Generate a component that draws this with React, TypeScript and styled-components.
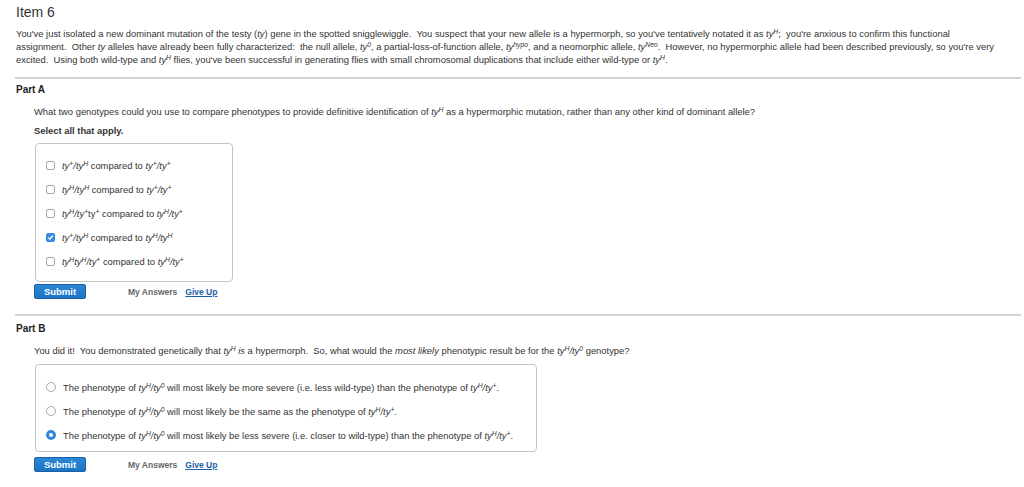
import React from "react";
import { styled, createGlobalStyle } from "styled-components";

const GlobalStyle = createGlobalStyle`
  html, body {
    margin: 0;
    padding: 0;
    background: #fff;
    font-family: "Liberation Sans", Arial, sans-serif;
    color: #333;
  }
`;

const Page = styled.div`
  padding: 3px 3px 0 15px;
  font-size: 9.4px;
`;

const Title = styled.div`
  font-size: 14px;
  line-height: 18px;
  padding-left: 1px;
  color: #333;
`;

const Intro = styled.p`
  margin: 6px 0 0 1px;
  line-height: 13px;
  white-space: nowrap;
`;

const Gene = styled.i`
  font-style: italic;
`;

const Sup = styled.sup`
  font-size: 6.8px;
  line-height: 0;
  vertical-align: 3.5px;
`;

const Divider = styled.div<{ $gap?: number }>`
  margin-top: ${(p) => p.$gap ?? 11}px;
  border-top: 2px solid #d3d3d3;
`;

const PartTitle = styled.div<{ $top?: number }>`
  margin-top: ${(p) => p.$top ?? 4}px;
  padding-left: 1px;
  font-size: 10px;
  font-weight: bold;
  line-height: 14px;
  color: #222;
`;

const PartBody = styled.div`
  padding-left: 19px;
`;

const Question = styled.p<{ $top?: number }>`
  margin: ${(p) => p.$top ?? 8}px 0 0;
  line-height: 13px;
`;

const Instruction = styled.p`
  margin: 6px 0 0;
  line-height: 13px;
  font-weight: bold;
`;

const ChoiceBox = styled.div<{ $width: number; $pad: string; $top?: number }>`
  box-sizing: border-box;
  width: ${(p) => p.$width}px;
  margin: ${(p) => p.$top ?? 6}px 0 0 1px;
  padding: ${(p) => p.$pad};
  border: 1px solid #c4c4c4;
  border-radius: 4px;
  background: #fff;
`;

const ChoiceRow = styled.div`
  display: flex;
  align-items: center;
  height: 24px;
  padding-left: 10px;
`;

const CheckBox = styled.span<{ $checked: boolean }>`
  box-sizing: border-box;
  width: 9px;
  height: 9px;
  border-radius: 2px;
  display: flex;
  align-items: center;
  justify-content: center;
  border: 1px solid ${(p) => (p.$checked ? "#2f86de" : "#a8a8a8")};
  background: ${(p) => (p.$checked ? "#3d8fe3" : "#fff")};
`;

const Radio = styled.span<{ $selected: boolean }>`
  box-sizing: border-box;
  width: 10px;
  height: 10px;
  border-radius: 50%;
  border: ${(p) => (p.$selected ? "3px solid #2f86de" : "1px solid #a8a8a8")};
  background: #fff;
`;

const ChoiceText = styled.span`
  margin-left: 7px;
  line-height: 13px;
  color: #333;
`;

const ActionRow = styled.div<{ $top?: number }>`
  display: flex;
  align-items: center;
  margin-top: ${(p) => p.$top ?? 2}px;
`;

const SubmitButton = styled.button`
  box-sizing: border-box;
  width: 52px;
  height: 15px;
  padding: 0;
  border: 1px solid #1a5fa5;
  border-radius: 2px;
  background: linear-gradient(#2a88d6, #1c74c4);
  color: #fff;
  font-family: "Liberation Sans", Arial, sans-serif;
  font-size: 9.5px;
  font-weight: bold;
  line-height: 13px;
  cursor: pointer;
`;

const MyAnswers = styled.span`
  margin-left: 42px;
  font-size: 8.5px;
  font-weight: bold;
  color: #666;
`;

const GiveUp = styled.a`
  margin-left: 8px;
  font-size: 8.5px;
  font-weight: bold;
  color: #1c5ea8;
  text-decoration: underline;
  cursor: pointer;
`;

const Ty = ({ sup }: { sup: string }) => (
  <Gene>
    ty<Sup>{sup}</Sup>
  </Gene>
);

const Pair = ({ a, b }: { a: string; b: string }) => (
  <Gene>
    ty<Sup>{a}</Sup>/ty<Sup>{b}</Sup>
  </Gene>
);

const checkOptions: { content: React.ReactNode; checked?: boolean }[] = [
  {
    content: (
      <>
        <Pair a="+" b="H" /> compared to <Pair a="+" b="+" />
      </>
    ),
  },
  {
    content: (
      <>
        <Pair a="H" b="H" /> compared to <Pair a="+" b="+" />
      </>
    ),
  },
  {
    content: (
      <>
        <Pair a="H" b="+" />ty<Sup>+</Sup> compared to <Pair a="H" b="+" />
      </>
    ),
  },
  {
    checked: true,
    content: (
      <>
        <Pair a="+" b="H" /> compared to <Pair a="H" b="H" />
      </>
    ),
  },
  {
    content: (
      <>
        <Ty sup="H" />
        <Pair a="H" b="+" /> compared to <Pair a="H" b="+" />
      </>
    ),
  },
];

const radioOptions: { tail: string; selected?: boolean }[] = [
  { tail: "more severe (i.e. less wild-type) than the phenotype of" },
  { tail: "the same as the phenotype of" },
  { tail: "less severe (i.e. closer to wild-type) than the phenotype of", selected: true },
];

const Actions = ({ top }: { top?: number }) => (
  <ActionRow $top={top}>
    <SubmitButton>Submit</SubmitButton>
    <MyAnswers>My Answers</MyAnswers>
    <GiveUp>Give Up</GiveUp>
  </ActionRow>
);

const App = () => {
  return (
    <Page>
      <GlobalStyle />
      <Title>Item 6</Title>
      <Intro>
        You've just isolated a new dominant mutation of the testy (<Gene>ty</Gene>) gene in the spotted snigglewiggle.&nbsp; You suspect
        that your new allele is a hypermorph, so you've tentatively notated it as <Ty sup="H" />;&nbsp; you're anxious to confirm this
        functional
        <br />
        assignment.&nbsp; Other <Gene>ty</Gene> alleles have already been fully characterized:&nbsp; the null allele, <Ty sup="0" />, a
        partial-loss-of-function allele, <Ty sup="hypo" />, and a neomorphic allele, <Ty sup="Neo" />.&nbsp; However, no hypermorphic
        allele had been described previously, so you're very
        <br />
        excited.&nbsp; Using both wild-type and <Ty sup="H" /> flies, you've been successful in generating flies with small chromosomal
        duplications that include either wild-type or <Ty sup="H" />.
      </Intro>

      <Divider />
      <PartTitle>Part A</PartTitle>
      <PartBody>
        <Question $top={8}>
          What two genotypes could you use to compare phenotypes to provide definitive identification of <Ty sup="H" /> as a
          hypermorphic mutation, rather than any other kind of dominant allele?
        </Question>
        <Instruction>Select all that apply.</Instruction>
        <ChoiceBox $width={198} $pad="9px 0 8px">
          {checkOptions.map((o, i) => (
            <ChoiceRow key={i}>
              <CheckBox $checked={!!o.checked}>
                {o.checked && (
                  <svg width="7" height="7" viewBox="0 0 7 7">
                    <path d="M1.2 3.6 L2.8 5.1 L5.8 1.8" stroke="#fff" strokeWidth="1.3" fill="none" />
                  </svg>
                )}
              </CheckBox>
              <ChoiceText>{o.content}</ChoiceText>
            </ChoiceRow>
          ))}
        </ChoiceBox>
        <Actions />
      </PartBody>

      <Divider $gap={15} />
      <PartTitle $top={6}>Part B</PartTitle>
      <PartBody>
        <Question $top={8}>
          You did it!&nbsp; You demonstrated genetically that <Ty sup="H" /> <Gene>is</Gene> a hypermorph.&nbsp; So, what would the{" "}
          <Gene>most likely</Gene> phenotypic result be for the <Pair a="H" b="0" /> genotype?
        </Question>
        <ChoiceBox $width={502} $pad="10px 0 4px" $top={7}>
          {radioOptions.map((o, i) => (
            <ChoiceRow key={i}>
              <Radio $selected={!!o.selected} />
              <ChoiceText>
                The phenotype of <Pair a="H" b="0" /> will most likely be {o.tail} <Pair a="H" b="+" />.
              </ChoiceText>
            </ChoiceRow>
          ))}
        </ChoiceBox>
        <Actions top={5} />
      </PartBody>
    </Page>
  );
};

export default App;
